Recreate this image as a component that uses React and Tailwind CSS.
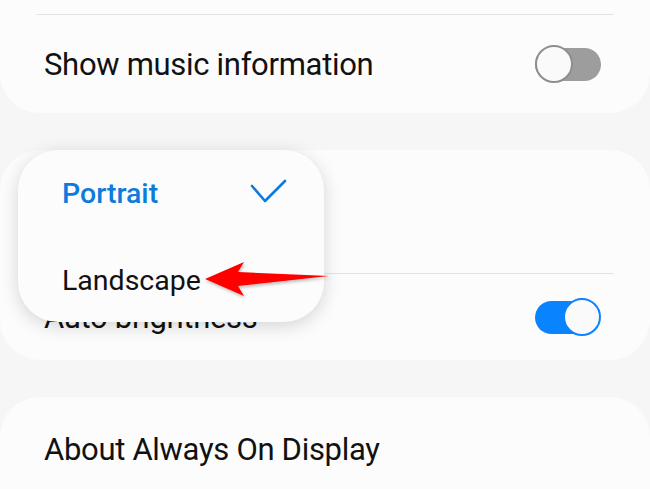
import React from "react";

function Toggle({ on }) {
  if (on) {
    return (
      <div className="relative w-[66px] h-[40px] flex items-center">
        <div className="w-[64px] h-[33px] rounded-full bg-[#0a84fe]" />
        <div className="absolute right-0 top-[1px] w-[38px] h-[38px] rounded-full bg-[#fafafa] border-2 border-[#0a84fe]" />
      </div>
    );
  }
  return (
    <div className="relative w-[66px] h-[40px] flex items-center">
      <div className="w-[66px] h-[33px] rounded-full bg-[#9d9d9d]" />
      <div className="absolute left-0 top-[1px] w-[38px] h-[38px] rounded-full bg-[#fafafa] border-2 border-[#8e8e8e]" />
    </div>
  );
}

export default function App() {
  return (
    <div
      className="relative w-[650px] h-[489px] overflow-hidden bg-[#f6f6f6] text-[#111]"
      style={{ fontFamily: "Roboto, 'Noto Sans', sans-serif" }}
    >
      {/* Card 1 */}
      <div className="bg-[#fcfcfc] rounded-b-[40px] pt-[14px]">
        <div className="mx-[36px] h-px bg-[#e4e4e4]" />
        <div className="h-[98px] flex items-center justify-between pl-[44px] pr-[49px]">
          <span className="text-[31px] leading-none tracking-[-0.3px]">Show music information</span>
          <Toggle on={false} />
        </div>
      </div>

      {/* Card 2 */}
      <div className="mt-[37px] bg-[#fcfcfc] rounded-[40px] h-[210px] flex flex-col">
        <div className="h-[123px]" />
        <div className="mx-[36px] h-px bg-[#e4e4e4]" />
        <div className="flex-1 flex items-center justify-between pl-[44px] pr-[49px]">
          <span className="text-[31px] leading-none tracking-[-0.3px]">Auto brightness</span>
          <Toggle on={true} />
        </div>
      </div>

      {/* Card 3 */}
      <div className="mt-[37px] bg-[#fcfcfc] rounded-t-[40px] h-[120px] pl-[44px] pt-[37px]">
        <span className="text-[31px] leading-none tracking-[-0.3px]">About Always On Display</span>
      </div>

      {/* Popup */}
      <div className="absolute left-[18px] top-[150px] w-[306px] h-[172px] rounded-[40px] bg-[#fcfcfc] shadow-[0_4px_18px_rgba(0,0,0,0.16)] flex flex-col pl-[44px]">
        <div className="h-[86px] flex items-center justify-between pr-[36px] pt-[2px]">
          <span className="text-[28.5px] font-medium leading-none text-[#0b7bdd]">Portrait</span>
          <svg width="38" height="26" viewBox="0 0 38 26" className="mt-[-4px]">
            <polyline points="2,7 15,22 35,2" fill="none" stroke="#0b7bdd" strokeWidth="2.6" strokeLinecap="round" strokeLinejoin="round" />
          </svg>
        </div>
        <div className="h-[86px] flex items-center pb-[20px] pt-[24px]">
          <span className="text-[28.5px] leading-none text-[#111]">Landscape</span>
        </div>
      </div>

      {/* Arrow */}
      <svg className="absolute left-0 top-0 pointer-events-none" width="650" height="489" viewBox="0 0 650 489">
        <defs>
          <filter id="sh" x="-20%" y="-50%" width="140%" height="200%">
            <feDropShadow dx="1" dy="2" stdDeviation="1.5" floodColor="#000" floodOpacity="0.25" />
          </filter>
        </defs>
        <polygon
          points="205,279 244,262 238,272 329,276 238,286 244,296"
          fill="#ff0000"
          filter="url(#sh)"
        />
      </svg>
    </div>
  );
}
